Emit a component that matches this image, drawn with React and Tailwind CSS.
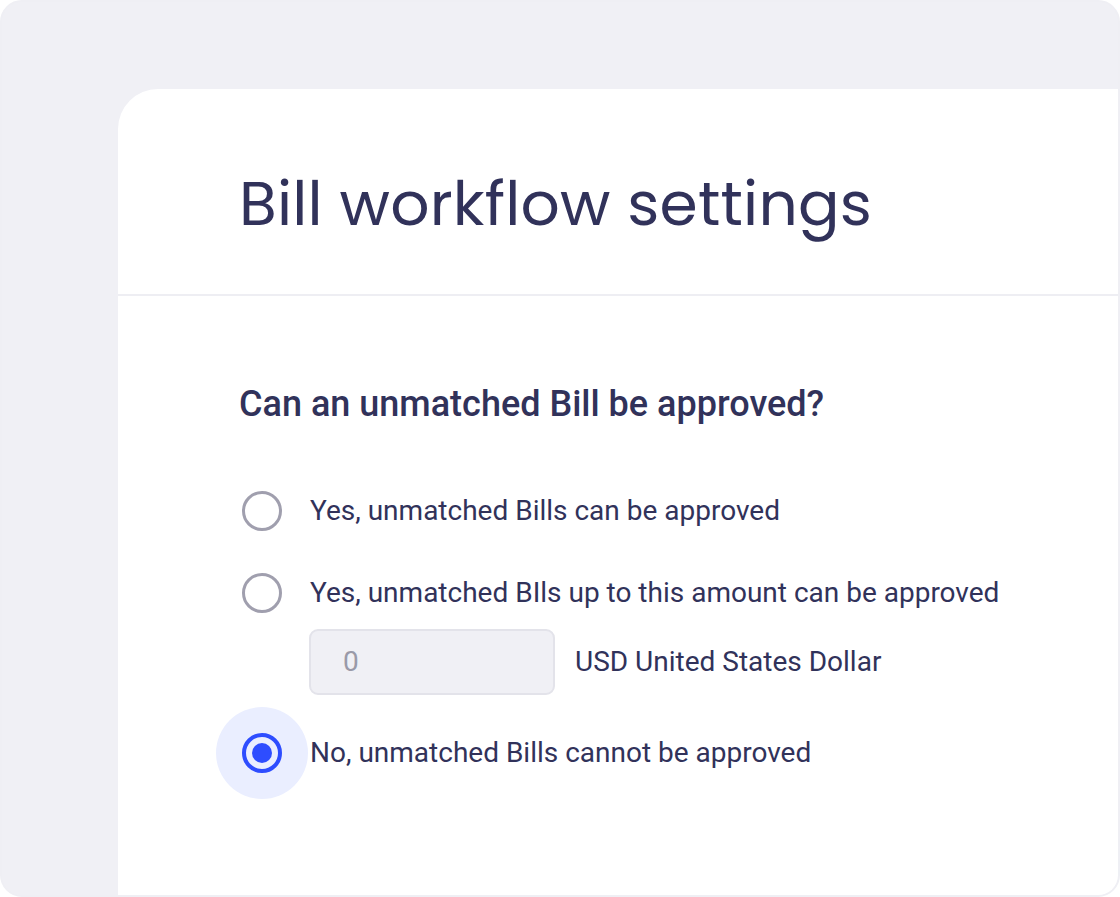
export default function App() {
  const radios = "w-[40px] h-[40px] rounded-full border-[3px] border-[#a09fae] shrink-0"
  return (
    <div className="w-[1120px] h-[897px] bg-white">
      <div className="w-[1120px] h-[897px] rounded-[22px] bg-[#f0f0f5] border-2 border-[#efeff4] overflow-hidden flex flex-col">
        <div className="h-[87px] shrink-0" />
        <div className="flex-1 ml-[116px] bg-white rounded-tl-[40px] flex flex-col text-[#31325a]">
          <div className="h-[207px] shrink-0 border-b-2 border-[#eeeef3] pl-[121px] pt-[75px]">
            <h1 className="text-[61.5px] leading-[80px] font-normal tracking-[0.2px]" style={{ fontFamily: '"Poppins", "Lato", sans-serif' }}>
              Bill workflow settings
            </h1>
          </div>
          <div className="pl-[98px] pt-[86px] flex flex-col" style={{ fontFamily: 'Roboto, sans-serif' }}>
            <h2 className="pl-[23px] text-[36px] leading-[44px] font-medium">Can an unmatched Bill be approved?</h2>
            <div className="mt-[65px] flex items-center gap-[28px] pl-[26px] h-[40px]">
              <span className={radios} />
              <span className="text-[28px]">Yes, unmatched Bills can be approved</span>
            </div>
            <div className="mt-[42px] flex items-center gap-[28px] pl-[26px] h-[40px]">
              <span className={radios} />
              <span className="text-[28px]">Yes, unmatched BIls up to this amount can be approved</span>
            </div>
            <div className="mt-[16px] ml-[93px] flex items-center gap-[20px]">
              <div className="w-[246px] h-[66px] rounded-[9px] bg-[#f0f0f5] border-2 border-[#e3e3ea] flex items-center pl-[32px] text-[28px] text-[#9a9aa8]">0</div>
              <span className="text-[28px]">USD United States Dollar</span>
            </div>
            <div className="mt-[12px] flex items-center">
              <div className="w-[92px] h-[92px] rounded-full bg-[#eaeeff] flex items-center justify-center shrink-0">
                <span className="w-[40px] h-[40px] rounded-full border-[4px] border-[#2e4dff] flex items-center justify-center">
                  <span className="w-[20px] h-[20px] rounded-full bg-[#2e4dff]" />
                </span>
              </div>
              <span className="text-[28px] ml-[2px]">No, unmatched Bills cannot be approved</span>
            </div>
          </div>
        </div>
      </div>
    </div>
  )
}
